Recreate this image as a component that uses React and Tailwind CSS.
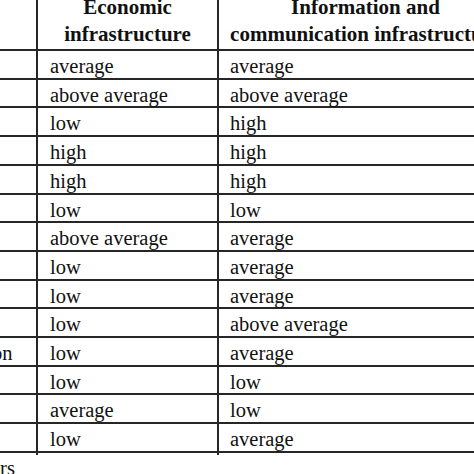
export default function App() {
  const col2 = ["average","above average","low","high","high","low","above average","low","low","low","low","low","average","low"];
  const col3 = ["average","above average","high","high","high","low","average","average","average","above average","average","low","low","average"];
  const serif = { fontFamily: '"Liberation Serif", "Times New Roman", serif' };
  return (
    <div className="w-[474px] h-[474px] overflow-hidden bg-white text-[#111]" style={serif}>
      <div className="w-[560px]">
        <div className="grid grid-cols-[38px_181px_293px] grid-rows-[49px] h-[51px] border-b-2 border-[#262626]">
          <div className="border-r-2 border-[#262626]"></div>
          <div className="border-r-2 border-[#262626] h-[49px] flex flex-col justify-end items-center font-bold text-[21px] leading-[27px] pb-[1px]">
            <div className="whitespace-nowrap">Economic</div>
            <div className="whitespace-nowrap">infrastructure</div>
          </div>
          <div className="h-[49px] flex flex-col justify-end items-center font-bold text-[21px] leading-[27px] pb-[1px]">
            <div className="whitespace-nowrap">Information and</div>
            <div className="whitespace-nowrap">communication infrastructure</div>
          </div>
        </div>
        {col2.map((v, i) => (
          <div key={i} className="grid grid-cols-[38px_181px_293px] h-[28.714px] border-b-2 border-[#262626] text-[20.5px] leading-normal">
            <div className="border-r-2 border-[#262626] flex items-center overflow-hidden">
              {i === 10 ? <span className="ml-[-8px] whitespace-nowrap">on</span> : null}
            </div>
            <div className="border-r-2 border-[#262626] flex items-center pl-[12px] whitespace-nowrap">{v}</div>
            <div className="flex items-center pl-[11px] whitespace-nowrap">{col3[i]}</div>
          </div>
        ))}
        <div className="text-[20.5px] leading-normal">
          <span className="inline-block ml-[-9px] whitespace-nowrap">ers</span>
        </div>
      </div>
    </div>
  );
}
